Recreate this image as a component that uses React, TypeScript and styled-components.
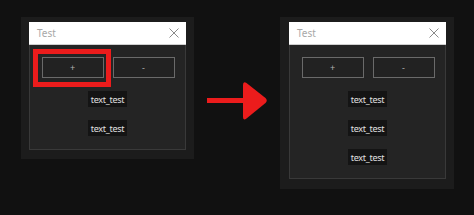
import styled, {createGlobalStyle} from 'styled-components'

const GlobalStyle = createGlobalStyle`
  html, body {
    margin: 0;
    padding: 0;
    background: #111111;
    font-family: 'Noto Sans', 'Open Sans', sans-serif;
  }
`

const Stage = styled.div`
  display: flex;
  align-items: flex-start;
  width: 474px;
  height: 215px;
  box-sizing: border-box;
  padding: 17px 0 0 21px;
`

const Panel = styled.div<{$tall?: boolean}>`
  background: #1c1c1c;
  padding: ${p => (p.$tall ? '5px 8px 10px 9px' : '5px 8px 9px 8px')};
`

const Window = styled.div`
  width: 157px;
  box-sizing: border-box;
  background: #242424;
  border: 1px solid #393939;
  border-top: none;
  display: flex;
  flex-direction: column;
`

const TitleBar = styled.div`
  height: 23px;
  background: #ffffff;
  border-bottom: 1px solid #cfcfcf;
  margin: 0 -1px;
  display: flex;
  align-items: center;
  justify-content: space-between;
  padding: 0 7px 0 8px;
  box-sizing: border-box;
`

const Title = styled.span`
  font-size: 10px;
  color: #a8a8a8;
`

const Body = styled.div`
  display: flex;
  flex-direction: column;
  align-items: center;
  padding: 12px 0 13px;
  gap: 13px;
`

const ButtonRow = styled.div`
  display: flex;
  gap: 9px;
  padding-left: 1px;
`

const Slot = styled.div`
  position: relative;
`

const Highlight = styled.div`
  position: absolute;
  top: -8px;
  left: -9px;
  right: -7px;
  bottom: -9px;
  border: 5px solid #ec1c1c;
  pointer-events: none;
`

const Button = styled.div`
  width: 62px;
  height: 21px;
  box-sizing: border-box;
  border: 1px solid #6a6a6a;
  background: #222222;
  color: #b0b0b0;
  font-size: 9px;
  display: flex;
  align-items: center;
  justify-content: center;
`

const Label = styled.div`
  height: 16px;
  padding: 0 3px;
  background: #141414;
  color: #e0e0e0;
  font-size: 9px;
  display: flex;
  align-items: center;
  letter-spacing: -0.3px;
`

const ArrowWrap = styled.div`
  margin: 64px 12px 0 13px;
  width: 61px;
  height: 40px;
`

const CloseIcon = () => (
  <svg width="10" height="10" viewBox="0 0 10 10">
    <path d="M0.5 0.5 L9.5 9.5 M9.5 0.5 L0.5 9.5" stroke="#8a8a8a" strokeWidth="1" fill="none" />
  </svg>
)

const Arrow = () => (
  <svg width="61" height="40" viewBox="0 0 61 40">
    <rect x="0" y="17" width="40" height="5" fill="#ec1c1c" />
    <path
      d="M36 4 Q36 0 39.5 2 L58.5 17 Q61 19.5 58.5 22 L39.5 37.5 Q36 40 36 36 Z"
      fill="#ec1c1c"
    />
  </svg>
)

const TestWindow = ({labels, highlight}: {labels: number; highlight?: boolean}) => (
  <Panel $tall={labels > 2}>
    <Window>
      <TitleBar>
        <Title>Test</Title>
        <CloseIcon />
      </TitleBar>
      <Body>
        <ButtonRow>
          <Slot>
            <Button>+</Button>
            {highlight && <Highlight />}
          </Slot>
          <Slot>
            <Button>-</Button>
          </Slot>
        </ButtonRow>
        {Array.from({length: labels}).map((_, i) => (
          <Label key={i}>text_test</Label>
        ))}
      </Body>
    </Window>
  </Panel>
)

const App = () => {
  return (
    <>
      <GlobalStyle />
      <Stage>
        <TestWindow labels={2} highlight />
        <ArrowWrap>
          <Arrow />
        </ArrowWrap>
        <TestWindow labels={3} />
      </Stage>
    </>
  )
}

export default App
